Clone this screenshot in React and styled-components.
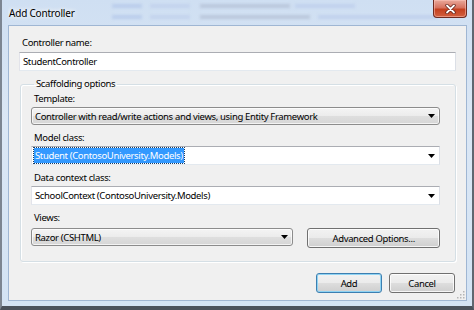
import styled, { createGlobalStyle } from "styled-components";

const GlobalStyle = createGlobalStyle`
  html, body {
    margin: 0;
    padding: 0;
    background: #3a3f46;
  }
  body {
    font-family: "Noto Sans", "Open Sans", sans-serif;
    font-size: 9.5px;
    letter-spacing: -0.35px;
    color: #000;
  }
  * { box-sizing: border-box; }
`;

const Window = styled.div`
  position: relative;
  width: 474px;
  height: 310px;
  display: flex;
  flex-direction: column;
  padding: 0 5px 5px 6px;
  background: linear-gradient(to bottom, #cfdff2 0%, #dbe7f5 40%, #d3e3f4 100%);
  border-left: 2px solid #7c8591;
  border-right: 2px solid #5f6771;
  border-bottom: 4px solid #4a525c;
`;

const TitleBar = styled.div`
  position: relative;
  height: 25px;
  flex: none;
  display: flex;
  align-items: flex-start;
  justify-content: space-between;
  padding-left: 1px;
  overflow: hidden;
  &::before {
    content: "";
    position: absolute;
    inset: 0;
    filter: blur(1.5px);
    background-image:
      linear-gradient(#b3c7ea, #b3c7ea),
      linear-gradient(#bfcfec, #bfcfec),
      linear-gradient(#b3bfd4, #b3bfd4),
      linear-gradient(#bccdec, #bccdec),
      linear-gradient(#b3c7ea, #b3c7ea),
      linear-gradient(#bfcfec, #bfcfec),
      linear-gradient(#b3bfd4, #b3bfd4),
      linear-gradient(#bccdec, #bccdec);
    background-repeat: no-repeat;
    background-size:
      30px 4px, 40px 4px, 90px 4px, 60px 4px,
      30px 4px, 40px 4px, 110px 4px, 120px 4px;
    background-position:
      104px 4px, 142px 4px, 192px 4px, 287px 4px,
      104px 15px, 142px 15px, 192px 15px, 310px 15px;
    opacity: 0.75;
  }
`;

const Title = styled.span`
  position: relative;
  margin-top: 6px;
  font-size: 10px;
  letter-spacing: -0.2px;
  line-height: 14px;
  color: #000;
  text-shadow: 0 0 6px #fff, 0 0 4px #fff;
`;

const CloseButton = styled.div`
  position: relative;
  width: 34px;
  height: 18px;
  display: flex;
  align-items: center;
  justify-content: center;
  border: 1px solid #6e2a20;
  border-top: none;
  border-radius: 0 0 4px 4px;
  background: linear-gradient(to bottom, #e9a99b 0%, #d7725f 45%, #c4401f 55%, #d2603f 100%);
  box-shadow: inset 0 0 0 1px rgba(255, 200, 190, 0.5);
`;

const Client = styled.div`
  flex: 1;
  display: flex;
  flex-direction: column;
  padding: 0 10px;
  background: #f0f0f0;
  border: 1px solid #9fb6d3;
  position: relative;
`;

const Label = styled.div`
  line-height: 16px;
  height: 16px;
  padding-left: ${(p) => p.$indent || 2}px;
  margin-top: ${(p) => p.$top || 0}px;
  white-space: nowrap;
`;

const TextBox = styled.div`
  height: 19px;
  margin-top: 1px;
  padding: 0 3px;
  line-height: 17px;
  background: #fff;
  border: 1px solid #e3e9ef;
  border-top-color: #abadb3;
  border-left-color: #e2e3ea;
  border-right-color: #dbdfe6;
`;

const Group = styled.fieldset`
  margin: 6px 0 0 1px;
  padding: 0 15px 13px 10px;
  border: 1px solid #d5dfe5;
  border-radius: 3px;
  box-shadow: inset 1px 1px 0 #fff, 1px 1px 0 #fff;
  min-width: 0;
`;

const Legend = styled.legend`
  padding: 0 2px;
  margin-left: 3px;
  line-height: 14px;
`;

const Combo = styled.div`
  position: relative;
  height: ${(p) => p.$h || 19}px;
  width: ${(p) => (p.$w ? `${p.$w}px` : "auto")};
  display: flex;
  align-items: center;
  padding: 0 18px 0 2px;
  white-space: nowrap;
  overflow: hidden;
  ${(p) =>
    p.$button
      ? `
    border: 1px solid #8c8c8c;
    border-radius: 3px;
    background: linear-gradient(to bottom, #f4f4f4 0%, #ececec 48%, #dedede 52%, #d6d6d6 100%);
    box-shadow: inset 0 0 0 1px rgba(255,255,255,0.7);
  `
      : `
    border: 1px solid #e3e9ef;
    border-top-color: #abadb3;
    border-left-color: #e2e3ea;
    border-right-color: #dbdfe6;
    background: #fff;
  `}
`;

const Arrow = styled.svg`
  position: absolute;
  right: 4px;
  top: 50%;
  margin-top: -2px;
`;

const Selected = styled.span`
  padding: 0 1px;
  line-height: 15px;
  background: #3399ff;
  color: #fff;
  outline: 1px dotted #1a3b60;
`;

const Plain = styled.span`
  padding-left: 1px;
`;

const ViewsRow = styled.div`
  display: flex;
  gap: 14px;
  margin-top: 2px;
`;

const Button = styled.div`
  width: ${(p) => p.$w || 66}px;
  height: 20px;
  display: flex;
  align-items: center;
  justify-content: center;
  border: 1px solid ${(p) => (p.$default ? "#3c7fb1" : "#707070")};
  border-radius: 3px;
  background: linear-gradient(to bottom, #f2f2f2 0%, #ebebeb 48%, #dddddd 52%, #cfcfcf 100%);
  box-shadow: inset 0 0 0 1px ${(p) => (p.$default ? "#8fd3f3" : "rgba(255,255,255,0.8)")};
`;

const Footer = styled.div`
  display: flex;
  justify-content: flex-end;
  gap: 7px;
  margin-top: 11px;
  padding-right: 1px;
`;

const Grip = styled.svg`
  position: absolute;
  right: 1px;
  bottom: 1px;
`;

const DropArrow = () => (
  <Arrow width="7" height="4" viewBox="0 0 7 4">
    <path d="M0 0h7L3.5 4z" fill="#000" />
  </Arrow>
);

export default function App() {
  return (
    <>
      <GlobalStyle />
      <Window>
        <TitleBar>
          <Title>Add Controller</Title>
          <CloseButton>
            <svg width="11" height="10" viewBox="0 0 11 10">
              <path d="M2 1.5l7 7M9 1.5l-7 7" stroke="#5a1a12" strokeWidth="3.2" strokeLinecap="round" />
              <path d="M2 1.5l7 7M9 1.5l-7 7" stroke="#fff" strokeWidth="1.8" strokeLinecap="round" />
            </svg>
          </CloseButton>
        </TitleBar>
        <Client>
          <Label $top={9} $indent={3}>Controller name:</Label>
          <TextBox>StudentController</TextBox>
          <Group>
            <Legend>Scaffolding options</Legend>
            <Label $indent={3}>Template:</Label>
            <Combo $button $h={18}>
              <Plain>Controller with read/write actions and views, using Entity Framework</Plain>
              <DropArrow />
            </Combo>
            <Label $top={5} $indent={3}>Model class:</Label>
            <Combo>
              <Selected>Student (ContosoUniversity.Models)</Selected>
              <DropArrow />
            </Combo>
            <Label $top={5} $indent={3}>Data context class:</Label>
            <Combo $h={19}>
              <Plain>SchoolContext (ContosoUniversity.Models)</Plain>
              <DropArrow />
            </Combo>
            <Label $top={5} $indent={3}>Views:</Label>
            <ViewsRow>
              <Combo $button $w={263} $h={18}>
                <Plain>Razor (CSHTML)</Plain>
                <DropArrow />
              </Combo>
              <Button $w={133}>Advanced Options...</Button>
            </ViewsRow>
          </Group>
          <Footer>
            <Button $default>Add</Button>
            <Button>Cancel</Button>
          </Footer>
          <Grip width="8" height="8" viewBox="0 0 8 8">
            <g fill="#b5b5b5">
              <rect x="6" y="0" width="1.5" height="1.5" />
              <rect x="3" y="3" width="1.5" height="1.5" />
              <rect x="6" y="3" width="1.5" height="1.5" />
              <rect x="0" y="6" width="1.5" height="1.5" />
              <rect x="3" y="6" width="1.5" height="1.5" />
              <rect x="6" y="6" width="1.5" height="1.5" />
            </g>
          </Grip>
        </Client>
      </Window>
    </>
  );
}
